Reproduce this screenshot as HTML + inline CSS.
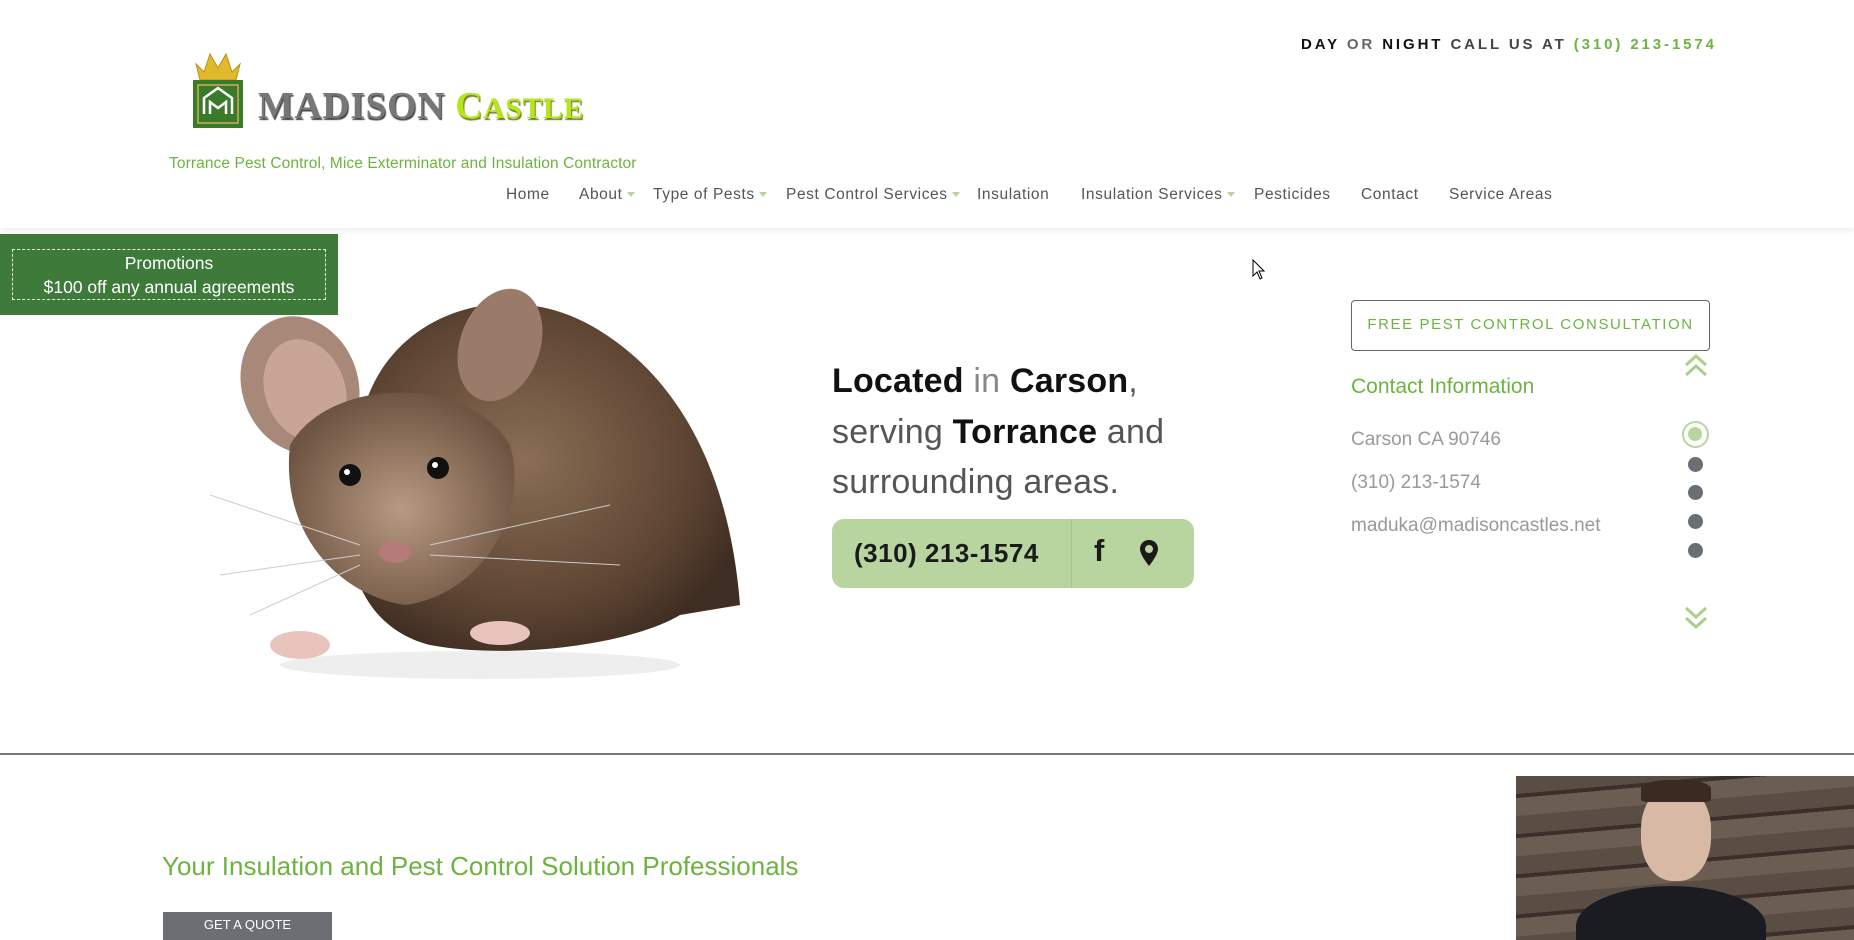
<!DOCTYPE html>
<html><head><meta charset="utf-8"><style>
*{margin:0;padding:0;box-sizing:border-box}
body{width:1854px;height:940px;overflow:hidden;background:#fff;font-family:"Liberation Sans",sans-serif;position:relative}
.a{position:absolute;white-space:nowrap}
.nav span{position:absolute;top:186px;font-size:15.5px;color:#555;letter-spacing:.6px}
.nav i{display:inline-block;width:0;height:0;border-left:4px solid transparent;border-right:4px solid transparent;border-top:5px solid #b8d49c;margin-left:4px;vertical-align:middle}
.dot{position:absolute;left:1688px;width:15px;height:15px;border-radius:50%;background:#6a6e75}
.bb{font-weight:bold;color:#111}
</style></head><body>
<!-- header -->
<div class="a" style="left:0;top:0;width:1854px;height:228px;box-shadow:0 3px 6px rgba(0,0,0,.06)"></div>
<svg class="a" style="left:190px;top:42px" width="56" height="88" viewBox="0 0 56 88">
<path d="M6 22 L14 30 L20 12 L28 26 L36 12 L42 30 L50 22 L46 38 L10 38Z" fill="#e0b92c" stroke="#b8901a"/>
<rect x="3" y="38" width="50" height="48" fill="#3a7a2a"/>
<rect x="8" y="43" width="40" height="38" fill="none" stroke="#c9b055" stroke-width="1.5"/>
<path d="M14 72 V56 L28 46 L42 56 V72 M20 72 V60 L28 66 L36 60 V72" fill="none" stroke="#fff" stroke-width="2.5"/>
</svg>
<div class="a" style="left:258px;top:84px;font-family:'Liberation Serif',serif;font-weight:bold;font-size:38px;color:#777;letter-spacing:.5px;text-shadow:1px 2px 1px #444">MADISON <span style="color:#b5e619;text-shadow:1px 2px 1px #6a7a20">C<span style="font-size:30px">ASTLE</span></span></div>
<div class="a" style="left:169px;top:155px;font-size:15.5px;color:#6db33f;letter-spacing:.1px">Torrance Pest Control, Mice Exterminator and Insulation Contractor</div>
<div class="a" style="left:1301px;top:36px;font-size:15px;font-weight:bold;letter-spacing:2.9px;color:#444"><span style="color:#111">DAY</span> <span style="color:#666">OR</span> <span style="color:#111">NIGHT</span> CALL US AT <span style="color:#6db33f">(310) 213-1574</span></div>
<div class="nav">
<span style="left:506px">Home</span>
<span style="left:579px">About<i></i></span>
<span style="left:653px">Type of Pests<i></i></span>
<span style="left:786px">Pest Control Services<i></i></span>
<span style="left:977px">Insulation</span>
<span style="left:1081px">Insulation Services<i></i></span>
<span style="left:1254px">Pesticides</span>
<span style="left:1361px">Contact</span>
<span style="left:1449px">Service Areas</span>
</div>
<!-- promo -->
<div class="a" style="left:0;top:234px;width:338px;height:81px;background:#3e7a3a;padding:15px 12px">
<div style="border:1px dashed #e8f0e0;height:51px;color:#fff;text-align:center;font-size:17.5px;line-height:24px;padding-top:1px">Promotions<br>$100 off any annual agreements</div></div>
<!-- mouse -->
<svg class="a" style="left:210px;top:275px" width="550" height="405" viewBox="0 0 550 405">
<defs><radialGradient id="b" cx=".45" cy=".45" r=".6"><stop offset="0" stop-color="#8a6e55"/><stop offset=".7" stop-color="#5e4533"/><stop offset="1" stop-color="#3e2d22"/></radialGradient>
<radialGradient id="f" cx=".5" cy=".55" r=".55"><stop offset="0" stop-color="#b89a82"/><stop offset="1" stop-color="#6e5442"/></radialGradient></defs>
<ellipse cx="270" cy="390" rx="200" ry="14" fill="#eee"/>
<path d="M150 150 C170 40 290 0 380 50 C470 100 520 200 530 330 L470 340 C420 370 300 385 220 370 C140 350 120 260 150 150Z" fill="url(#b)"/>
<ellipse cx="90" cy="110" rx="58" ry="70" fill="#a88878" transform="rotate(-20 90 110)"/>
<ellipse cx="95" cy="115" rx="40" ry="52" fill="#c9a597" transform="rotate(-20 95 115)"/>
<ellipse cx="290" cy="70" rx="40" ry="58" fill="#9a7a68" transform="rotate(20 290 70)"/>
<path d="M80 170 C120 100 260 100 300 170 C320 240 270 320 195 330 C130 320 70 260 80 170Z" fill="url(#f)"/>
<circle cx="140" cy="200" r="11" fill="#111"/><circle cx="228" cy="193" r="11" fill="#111"/>
<circle cx="137" cy="197" r="3" fill="#fff"/><circle cx="225" cy="190" r="3" fill="#fff"/>
<ellipse cx="185" cy="277" rx="16" ry="11" fill="#b57a7a"/>
<ellipse cx="90" cy="370" rx="30" ry="14" fill="#e8c4bc"/><ellipse cx="290" cy="358" rx="30" ry="12" fill="#e8c4bc"/>
<g stroke="#ccc" stroke-width="1" fill="none"><path d="M150 270 L0 220 M150 280 L10 300 M150 290 L40 340 M220 270 L400 230 M220 280 L410 290"/></g>
</svg>
<!-- located -->
<div class="a" style="left:832px;top:356px;font-size:34px;line-height:50.5px;color:#555;font-weight:normal;letter-spacing:.2px">
<span class="bb">Located</span> <span style="color:#888">in</span> <span class="bb">Carson</span>,<br>serving <span class="bb">Torrance</span> and<br>surrounding areas.</div>
<div class="a" style="left:832px;top:519px;width:362px;height:69px;background:#b9d59f;border-radius:12px">
<div class="a" style="left:22px;top:19px;font-size:26px;font-weight:bold;color:#1a1a1a;letter-spacing:.5px">(310) 213-1574</div>
<div class="a" style="left:239px;top:0;width:1px;height:69px;background:#a7c48c"></div>
<div class="a" style="left:262px;top:14px;font-size:31px;font-weight:bold;color:#1a1a1a">f</div>
<svg class="a" style="left:307px;top:20px" width="20" height="28" viewBox="0 0 20 28"><path d="M10 1 C4.5 1 1 5 1 10 C1 16 10 27 10 27 C10 27 19 16 19 10 C19 5 15.5 1 10 1Z M10 6 A4 4 0 1 1 9.99 6Z" fill="#1a1a1a" fill-rule="evenodd"/></svg>
</div>
<!-- right column -->
<div class="a" style="left:1351px;top:300px;width:359px;height:51px;border:1.5px solid #666;border-radius:4px;color:#6db33f;font-size:15px;letter-spacing:1.6px;text-align:center;line-height:48px">FREE PEST CONTROL CONSULTATION</div>
<svg class="a" style="left:1683px;top:353px" width="26" height="24" viewBox="0 0 26 24"><path d="M3 12 L13 3 L23 12 M3 22 L13 13 L23 22" fill="none" stroke="#a8d08a" stroke-width="3"/></svg>
<div class="a" style="left:1351px;top:375px;font-size:21px;color:#6db33f">Contact Information</div>
<div class="a" style="left:1351px;top:418px;font-size:19px;color:#999;line-height:43px">Carson CA 90746<br>(310) 213-1574<br>maduka@madisoncastles.net</div>
<div class="a" style="left:1682px;top:421px;width:27px;height:27px;border-radius:50%;border:2.5px solid #b9d59f"><div style="margin:4px;width:14px;height:14px;border-radius:50%;background:#b9d59f"></div></div>
<div class="dot" style="top:457px"></div><div class="dot" style="top:485px"></div><div class="dot" style="top:514px"></div><div class="dot" style="top:543px"></div>
<svg class="a" style="left:1683px;top:606px" width="26" height="24" viewBox="0 0 26 24"><path d="M3 2 L13 11 L23 2 M3 12 L13 21 L23 12" fill="none" stroke="#a8d08a" stroke-width="3"/></svg>
<!-- cursor -->
<svg class="a" style="left:1252px;top:259px" width="14" height="22" viewBox="0 0 14 22"><path d="M1 1 V17 L5 13 L8 20 L10 19 L7 12 L12 12Z" fill="#fff" stroke="#000"/></svg>
<!-- divider -->
<div class="a" style="left:0;top:753px;width:1854px;height:2px;background:#777"></div>
<div class="a" style="left:162px;top:851px;font-size:26px;color:#6db33f">Your Insulation and Pest Control Solution Professionals</div>
<div class="a" style="left:163px;top:912px;width:169px;height:28px;background:#6b6e73;color:#fff;font-size:13px;text-align:center;line-height:26px">GET A QUOTE</div>
<!-- video -->
<div class="a" style="left:1516px;top:776px;width:338px;height:164px;background:repeating-linear-gradient(175deg,#5a4d43 0 18px,#3a3029 18px 22px,#6b5d52 22px 40px);overflow:hidden">
<div class="a" style="left:125px;top:10px;width:70px;height:95px;border-radius:45%;background:#d8b9a6"></div>
<div class="a" style="left:125px;top:4px;width:70px;height:22px;border-radius:40% 40% 10% 10%;background:#3a2a20"></div>
<div class="a" style="left:60px;top:110px;width:190px;height:80px;border-radius:50% 50% 0 0;background:#1a1c22"></div>
</div>
</body></html>
